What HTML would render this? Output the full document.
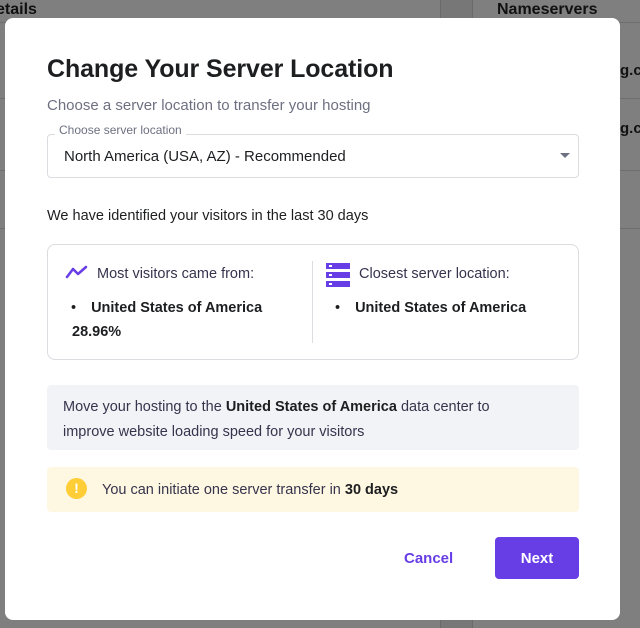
<!DOCTYPE html>
<html><head><style>
*{box-sizing:border-box;margin:0;padding:0}
body{width:640px;height:628px;overflow:hidden;background:#7f7f7f;font-family:"Liberation Sans",sans-serif;color:#1d1e20;position:relative}
.bgt{position:absolute;color:#111;font-weight:bold;font-size:16px}
.hl{position:absolute;left:0;right:0;height:1px;background:#6e6e6e}
.modal{position:absolute;left:5px;top:18px;width:615px;height:602px;background:#fff;border-radius:8px}
.a{position:absolute}
.b{font-weight:bold}
</style></head><body>
<div class="hl" style="top:22px"></div>
<div class="hl" style="top:98px"></div>
<div class="hl" style="top:170px"></div>
<div class="hl" style="top:228px"></div>
<div class="a" style="left:440px;top:0;width:33px;height:628px;background:#777;border-left:1px solid #6a6a6a;border-right:1px solid #6a6a6a"></div>
<div class="bgt" style="left:-4px;top:1px">etails</div>
<div class="bgt" style="left:497px;top:1px">Nameservers</div>
<div class="bgt" style="left:620px;top:62px;font-size:15px">g.co</div>
<div class="bgt" style="left:620px;top:120px;font-size:15px">g.co</div>
<div class="modal">
<div class="a b" style="left:42px;top:37px;font-size:25px;letter-spacing:-0.1px">Change Your Server Location</div>
<div class="a" style="left:42px;top:79px;font-size:15px;color:#6d7081">Choose a server location to transfer your hosting</div>
<div class="a" style="left:42px;top:116px;width:532px;height:44px;border:1px solid #dadce0;border-radius:4px"></div>
<div class="a" style="left:50px;top:105px;padding:0 4px;background:#fff;font-size:12px;color:#6d7081">Choose server location</div>
<div class="a" style="left:59px;top:130px;font-size:15px">North America (USA, AZ) - Recommended</div>
<div class="a" style="left:555px;top:135px;width:0;height:0;border-left:5px solid transparent;border-right:5px solid transparent;border-top:5px solid #6d7081"></div>
<div class="a" style="left:42px;top:190px;font-size:14.5px">We have identified your visitors in the last 30 days</div>
<div class="a" style="left:42px;top:226px;width:532px;height:116px;border:1px solid #dadce0;border-radius:8px"></div>
<div class="a" style="left:307px;top:243px;width:1px;height:82px;background:#dadce0"></div>
<svg class="a" style="left:60px;top:247px" width="24" height="14" viewBox="0 0 24 14"><path d="M2 12 L8 4 L13 9 L21 2" fill="none" stroke="#673de6" stroke-width="2.5" stroke-linejoin="round" stroke-linecap="round"/></svg>
<div class="a" style="left:92px;top:248px;font-size:14.5px;color:#36344d">Most visitors came from:</div>
<div class="a" style="left:66px;top:282px;font-size:14.5px" ><span style="margin-right:15px">•</span><b>United States of America</b></div>
<div class="a b" style="left:67px;top:306px;font-size:14.5px">28.96%</div>
<svg class="a" style="left:321px;top:245px" width="24" height="24" viewBox="0 0 24 24"><rect x="0" y="0" width="24" height="6" fill="#673de6"/><rect x="0" y="9" width="24" height="6" fill="#673de6"/><rect x="0" y="18" width="24" height="6" fill="#673de6"/><rect x="3" y="2" width="3" height="2" fill="#fff"/><rect x="3" y="11" width="3" height="2" fill="#fff"/><rect x="3" y="20" width="3" height="2" fill="#fff"/></svg>
<div class="a" style="left:354px;top:248px;font-size:14.5px;color:#36344d">Closest server location:</div>
<div class="a" style="left:330px;top:282px;font-size:14.5px"><span style="margin-right:15px">•</span><b>United States of America</b></div>
<div class="a" style="left:42px;top:367px;width:532px;height:65px;background:#f2f3f6;border-radius:4px"></div>
<div class="a" style="left:58px;top:377px;font-size:14.5px;line-height:25px;color:#36344d;width:460px">Move your hosting to the <b style="color:#1d1e20">United States of America</b> data center to improve website loading speed for your visitors</div>
<div class="a" style="left:42px;top:449px;width:532px;height:45px;background:#fef7e2;border-radius:4px"></div>
<div class="a" style="left:61px;top:460px;width:21px;height:21px;border-radius:50%;background:#ffcd35;color:#fff;font-weight:bold;font-size:14px;text-align:center;line-height:21px">!</div>
<div class="a" style="left:97px;top:464px;font-size:14.5px;color:#36344d">You can initiate one server transfer in <b style="color:#1d1e20">30 days</b></div>
<div class="a b" style="left:399px;top:532px;font-size:15px;color:#673de6">Cancel</div>
<div class="a b" style="left:490px;top:519px;width:84px;height:42px;background:#673de6;border-radius:4px;color:#fff;font-size:15px;text-align:center;line-height:44px">Next</div>
</div>
</body></html>
